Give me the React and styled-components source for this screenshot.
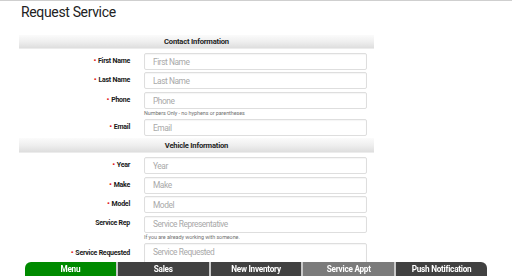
import React from 'react'
import styled, { createGlobalStyle } from 'styled-components';

const GlobalStyle = createGlobalStyle`
    html, body {
        margin: 0;
        padding: 0;
        background: #ffffff;
        font-family: Roboto, "Liberation Sans", Arial, sans-serif;
        overflow: hidden;
    }
`

const Page = styled.div`
    border-top: 1px solid #cfcfcf;
    height: 275px;
`

const Title = styled.h1`
    margin: 0;
    padding: 0 21px;
    height: 34px;
    font-size: 14px;
    line-height: 23px;
    font-weight: 400;
    letter-spacing: -0.35px;
    color: #222;
`

const Form = styled.div`
    margin-left: 19px;
    width: 355px;
`

const SectionHeader = styled.div`
    height: ${props => props.tall ? 14 : 13}px;
    margin-top: ${props => props.top}px;
    margin-bottom: 5px;
    background: linear-gradient(to bottom, #fbfbfb 0%, #efefef 50%, #dedede 100%);
    box-shadow: 0 1px 0 #ececec;
    display: flex;
    align-items: center;
    justify-content: center;
    font-size: 7.6px;
    font-weight: 700;
    letter-spacing: -0.2px;
    color: #1e1e1e;
`

const Row = styled.div`
    display: grid;
    grid-template-columns: 111px 223px;
    column-gap: 14px;
    align-items: ${props => props.top ? 'start' : 'center'};
    margin-bottom: ${props => props.gap}px;
`

const Label = styled.label`
    text-align: right;
    font-size: 7px;
    font-weight: 700;
    letter-spacing: -0.25px;
    color: #1a1a1a;
    margin-top: ${props => props.top ? '5px' : '-2px'};
`

const Req = styled.span`
    color: #e21b1b;
    font-size: 8px;
    margin-right: 2px;
`

const Input = styled.div`
    height: ${props => props.h || 17}px;
    box-sizing: border-box;
    border: 1px solid #dedede;
    border-radius: 2px;
    box-shadow: inset 0 1px 1px rgba(0, 0, 0, 0.04);
    background: #fff;
    padding: ${props => props.h ? '3px' : '0'} 8px 0;
    display: flex;
    align-items: ${props => props.h ? 'flex-start' : 'center'};
    font-size: 8.4px;
    letter-spacing: -0.45px;
    color: #a9a9a9;
`

const Help = styled.div`
    grid-column: 2;
    height: ${props => props.h}px;
    font-size: 5.4px;
    line-height: 8px;
    color: #707070;
    letter-spacing: -0.05px;
`

const Nav = styled.nav`
    position: fixed;
    left: 25px;
    bottom: 0;
    width: 462px;
    height: 14px;
    display: flex;
`

const Tab = styled.div`
    flex: 1;
    display: flex;
    align-items: center;
    justify-content: center;
    background: ${props => props.bg};
    color: #fff;
    font-size: 8.2px;
    font-weight: 700;
    letter-spacing: -0.25px;
    &:first-child { border-top-left-radius: 6px; }
    &:last-child { border-top-right-radius: 6px; }
    & + & { border-left: 2px solid #c9c9c9; }
`

const contact = [
    { name: 'First Name', req: true, gap: 2 },
    { name: 'Last Name', req: true, gap: 3 },
    { name: 'Phone', req: true, gap: 0, help: 'Numbers Only - no hyphens or parentheses', helpH: 10 },
    { name: 'Email', req: true, gap: 0 },
]

const vehicle = [
    { name: 'Year', req: true, gap: 2.5 },
    { name: 'Make', req: true, gap: 2.5 },
    { name: 'Model', req: true, gap: 2.5 },
    { name: 'Service Rep', placeholder: 'Service Representative', gap: 0, help: 'If you are already working with someone.', helpH: 10 },
    { name: 'Service Requested', req: true, gap: 0, h: 40 },
]

const tabs = [
    { name: 'Menu', bg: '#008a00' },
    { name: 'Sales', bg: '#414141' },
    { name: 'New Inventory', bg: '#414141' },
    { name: 'Service Appt', bg: '#7b7b7b' },
    { name: 'Push Notification', bg: '#414141' },
]

const Field = ({ item }) => (
    <Row gap={item.gap} top={!!item.h}>
        <Label top={!!item.h}>{item.req && <Req>•</Req>}{item.name}</Label>
        <Input h={item.h}>{item.placeholder || item.name}</Input>
        {item.help && <Help h={item.helpH}>{item.help}</Help>}
    </Row>
)

const App = () => {
  return (
    <Page>
      <GlobalStyle />
      <Title>Request Service</Title>
      <Form>
        <SectionHeader top={0}>Contact Information</SectionHeader>
        {contact.map((item, index) => <Field key={index} item={item} />)}
        <SectionHeader top={2} tall>Vehicle Information</SectionHeader>
        {vehicle.map((item, index) => <Field key={index} item={item} />)}
      </Form>
      <Nav>
        {tabs.map((t, index) => <Tab key={index} bg={t.bg}>{t.name}</Tab>)}
      </Nav>
    </Page>
  )
}

export default App
